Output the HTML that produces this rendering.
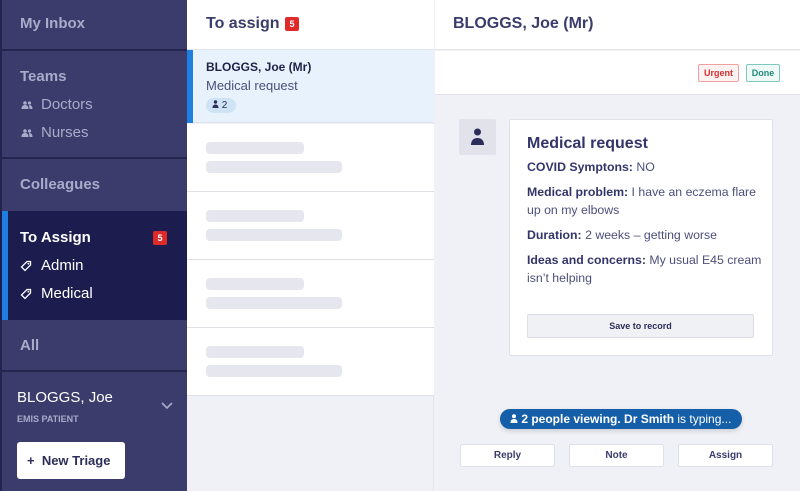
<!DOCTYPE html>
<html><head><meta charset="utf-8"><style>
*{margin:0;padding:0;box-sizing:border-box}
body{width:800px;height:491px;overflow:hidden;font-family:"Liberation Sans",sans-serif;background:#f0f1f6;position:relative;color:#3a3c6c}
.abs{position:absolute}
#side{left:0;top:0;width:187px;height:491px;background:#3b3c6c;box-shadow:inset 2px 0 0 #24254f}
.sh{color:#a9abca;font-weight:bold;font-size:15px;position:absolute;left:20px}
.si{color:#a9abca;font-size:15px;position:absolute;left:41px}
.dv{position:absolute;left:0;width:187px;height:2px;background:#25264f}
.sel{position:absolute;left:0;top:211px;width:187px;height:109px;background:#1c1d4e}
.bar{position:absolute;left:2px;top:211px;width:6px;height:109px;background:#1f7fe0}
.badge{background:#e02a2a;color:#fff;font-size:9px;font-weight:bold;border-radius:2px;width:14px;height:14px;text-align:center;line-height:14px}
.sk{position:absolute;background:#e6e6ee;border-radius:4px;height:12px}
.btn{position:absolute;top:444px;width:95px;height:23px;background:#fff;border:1px solid #e0e0ea;border-radius:2px;font-size:10px;font-weight:bold;text-align:center;line-height:21px;color:#3a3c6c}
p.l{font-size:12.3px;line-height:18px;margin-top:7px;color:#4c4f7c}
p.l b{color:#33356a}
</style></head><body>
<div id="side" class="abs">
<div class="sh" style="top:15px">My Inbox</div>
<div class="dv" style="top:49px"></div>
<div class="sh" style="top:68px">Teams</div>
<div class="si" style="top:96px"><svg style="position:absolute;left:-20px;top:4px" width="12" height="10" viewBox="0 0 12 10"><circle cx="4" cy="3" r="1.8" fill="#a9abca"/><circle cx="8.5" cy="3" r="1.6" fill="#a9abca"/><path d="M0.5 9c0-3 1.5-4 3.5-4s3.5 1 3.5 4zM8 5c2 0 3.5 1 3.5 4H8.5" fill="#a9abca"/></svg>Doctors</div>
<div class="si" style="top:124px"><svg style="position:absolute;left:-20px;top:4px" width="12" height="10" viewBox="0 0 12 10"><circle cx="4" cy="3" r="1.8" fill="#a9abca"/><circle cx="8.5" cy="3" r="1.6" fill="#a9abca"/><path d="M0.5 9c0-3 1.5-4 3.5-4s3.5 1 3.5 4zM8 5c2 0 3.5 1 3.5 4H8.5" fill="#a9abca"/></svg>Nurses</div>
<div class="dv" style="top:157px"></div>
<div class="sh" style="top:176px">Colleagues</div>
<div class="sel"></div><div class="bar"></div>
<div class="sh" style="top:229px;color:#fff">To Assign</div>
<div class="badge abs" style="left:153px;top:231px">5</div>
<div class="si" style="top:257px;color:#fff"><svg style="position:absolute;left:-21px;top:3px" width="12" height="12" viewBox="0 0 12 12"><path d="M7 1.5h3.5V5L5 10.5 1.5 7z" fill="none" stroke="#fff" stroke-width="1.3"/><circle cx="8.3" cy="3.7" r=".9" fill="#fff"/></svg>Admin</div>
<div class="si" style="top:285px;color:#fff"><svg style="position:absolute;left:-21px;top:3px" width="12" height="12" viewBox="0 0 12 12"><path d="M7 1.5h3.5V5L5 10.5 1.5 7z" fill="none" stroke="#fff" stroke-width="1.3"/><circle cx="8.3" cy="3.7" r=".9" fill="#fff"/></svg>Medical</div>
<div class="sh" style="top:337px">All</div>
<div class="dv" style="top:370px"></div>
<div class="abs" style="left:17px;top:389px;color:#fff;font-size:15px">BLOGGS, Joe</div>
<div class="abs" style="left:17px;top:414px;color:#a9abca;font-size:9px;font-weight:bold">EMIS PATIENT</div>
<svg class="abs" style="left:160px;top:401px" width="14" height="10" viewBox="0 0 14 10"><path d="M2 2l5 5 5-5" fill="none" stroke="#a9abca" stroke-width="1.6"/></svg>
<div class="abs" style="left:17px;top:442px;width:108px;height:37px;background:#fff;border-radius:3px;color:#2c2e5a;font-weight:bold;font-size:13px;line-height:37px;padding-left:10px">+&nbsp; New Triage</div>
</div>
<!-- middle -->
<div class="abs" style="left:187px;top:0;width:247px;height:491px;background:#f0f1f6;border-right:1px solid #e2e3ec">
<div class="abs" style="left:0;top:0;width:247px;height:50px;background:#fff;border-bottom:1px solid #e2e3ec"></div>
<div class="abs" style="left:19px;top:15px;font-size:16px;font-weight:bold">To assign</div>
<div class="badge abs" style="left:98px;top:17px">5</div>
<div class="abs" style="left:0;top:50px;width:247px;height:73px;background:#e8f2fc;border-bottom:1px solid #dfe1ea"></div>
<div class="abs" style="left:0;top:50px;width:6px;height:73px;background:#1f7fe0"></div>
<div class="abs" style="left:19px;top:60px;font-size:12px;font-weight:bold;color:#1f2148">BLOGGS, Joe (Mr)</div>
<div class="abs" style="left:19px;top:78px;font-size:13px;color:#4c4f7c">Medical request</div>
<div class="abs" style="left:19px;top:98px;width:30px;height:15px;background:#cfe3f7;border-radius:8px;font-size:10px;line-height:15px;padding-left:6px;color:#2c2e5a"><svg width="7" height="8" viewBox="0 0 7 8"><circle cx="3.5" cy="2" r="1.7" fill="#2c2e5a"/><path d="M0.5 8c0-2.5 1.3-3.5 3-3.5s3 1 3 3.5z" fill="#2c2e5a"/></svg> 2</div>
<div class="abs" style="left:0;top:124px;width:247px;height:271px;background:#fff"></div>
<div class="abs" style="left:0;top:191px;width:247px;height:1px;background:#dfe1ea"></div>
<div class="abs" style="left:0;top:259px;width:247px;height:1px;background:#dfe1ea"></div>
<div class="abs" style="left:0;top:327px;width:247px;height:1px;background:#dfe1ea"></div>
<div class="abs" style="left:0;top:395px;width:247px;height:1px;background:#dfe1ea"></div>
<div class="sk" style="left:19px;top:142px;width:98px"></div><div class="sk" style="left:19px;top:161px;width:136px"></div>
<div class="sk" style="left:19px;top:210px;width:98px"></div><div class="sk" style="left:19px;top:229px;width:136px"></div>
<div class="sk" style="left:19px;top:278px;width:98px"></div><div class="sk" style="left:19px;top:297px;width:136px"></div>
<div class="sk" style="left:19px;top:346px;width:98px"></div><div class="sk" style="left:19px;top:365px;width:136px"></div>
</div>
<!-- right -->
<div class="abs" style="left:435px;top:0;width:365px;height:50px;background:#fff;border-bottom:1px solid #e2e3ec"></div>
<div class="abs" style="left:453px;top:15px;font-size:16px;font-weight:bold">BLOGGS, Joe (Mr)</div>
<div class="abs" style="left:435px;top:51px;width:365px;height:44px;background:#fff;border-bottom:1px solid #e2e3ec"></div>
<div class="abs" style="left:698px;top:64px;width:41px;height:18px;border:1px solid #f0a0a0;background:#fdf2f2;color:#d63030;font-size:9px;font-weight:bold;text-align:center;line-height:16px;border-radius:2px">Urgent</div>
<div class="abs" style="left:746px;top:64px;width:34px;height:18px;border:1px solid #7fc8bd;background:#effaf7;color:#1f8a7c;font-size:9px;font-weight:bold;text-align:center;line-height:16px;border-radius:2px">Done</div>
<div class="abs" style="left:459px;top:119px;width:37px;height:36px;background:#e1e2ea;border-radius:2px"><svg width="37" height="36" viewBox="0 0 37 36"><circle cx="18.5" cy="13" r="3.5" fill="#2c2e5a"/><path d="M12 26c0-5 3-7 6.5-7s6.5 2 6.5 7z" fill="#2c2e5a"/></svg></div>
<div class="abs" style="left:509px;top:119px;width:264px;height:237px;background:#fff;border:1px solid #e0e1ea;border-radius:2px;padding:15px 10px 15px 17px">
<div style="font-size:16px;font-weight:bold;color:#33356a">Medical request</div>
<p class="l" style="margin-top:5px"><b>COVID Symptons:</b> NO</p>
<p class="l"><b>Medical problem:</b> I have an eczema flare up on my elbows</p>
<p class="l"><b>Duration:</b> 2 weeks – getting worse</p>
<p class="l"><b>Ideas and concerns:</b> My usual E45 cream isn’t helping</p>
</div>
<div class="abs" style="left:527px;top:314px;width:227px;height:24px;background:#f0f1f5;border:1px solid #dcdde6;border-radius:2px;font-size:9px;font-weight:bold;text-align:center;line-height:22px;color:#2c2e5a">Save to record</div>
<div class="abs" style="left:500px;top:409px;width:242px;height:20px;background:#155fa8;border-radius:10px;color:#fff;font-size:12px;line-height:20px;padding-left:10px;box-shadow:0 2px 5px rgba(0,0,0,.15)"><svg width="8" height="9" viewBox="0 0 8 9"><circle cx="4" cy="2.2" r="2" fill="#fff"/><path d="M0.5 9c0-3 1.5-4 3.5-4s3.5 1 3.5 4z" fill="#fff"/></svg> <b>2 people viewing. Dr Smith</b> is typing...</div>
<div class="btn" style="left:460px">Reply</div>
<div class="btn" style="left:569px">Note</div>
<div class="btn" style="left:678px">Assign</div>
</body></html>
